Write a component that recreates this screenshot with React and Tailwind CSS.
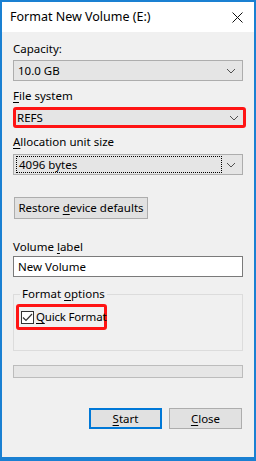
import React from 'react';

const font = { fontFamily: '"Noto Sans", "Open Sans", sans-serif' };

// access-key underline helper
function Key({ k }) {
  return <span className="underline underline-offset-2">{k}</span>;
}

function Chevron() {
  return (
    <svg width="10" height="6" viewBox="0 0 10 6" className="shrink-0">
      <path d="M1 1 L5 5 L9 1" fill="none" stroke="#505050" strokeWidth="1" />
    </svg>
  );
}

function Combo({ children, focused, className = '' }) {
  return (
    <div className={`flex items-center h-[21px] bg-[#e5e5e5] border border-[#adadad] pl-[2px] pr-[6px] ${className}`}>
      <div className={`flex-1 flex items-center h-[17px] pl-[2px] ${focused ? 'border border-dotted border-black' : ''}`}>
        {children}
      </div>
      <div className="w-[14px] flex justify-end">
        <Chevron />
      </div>
    </div>
  );
}

export default function App() {
  return (
    <div style={font} className="w-[256px] h-[461px] bg-[#1a80d2] p-[2px] pb-[4px] text-[11.5px] leading-[16px] text-black whitespace-nowrap">
      <div className="h-full flex flex-col bg-[#f0f0f0]">
        {/* title bar */}
        <div className="h-[30px] bg-white flex items-center justify-between pl-[8px] pr-[11px]">
          <span className="text-[12.5px]">Format New Volume (E:)</span>
          <svg width="11" height="11" viewBox="0 0 11 11">
            <path d="M0.5 0.5 L10.5 10.5 M10.5 0.5 L0.5 10.5" stroke="#111" strokeWidth="1" />
          </svg>
        </div>

        <div className="flex flex-col px-[11px]">
          <div className="mt-[9px]">Capacity:</div>
          <Combo className="mt-[3px]">10.0 GB</Combo>

          <div className="mt-[7px]"><Key k="F" />ile system</div>
          <div className="mt-[3px] -mr-[3px] border-[3px] border-[#ff1414] rounded-[3px]">
            <div className="flex items-center h-[15px] bg-[#e5e5e5] pl-[1px] pr-[4px]">
              <span className="flex-1">REFS</span>
              <Chevron />
            </div>
          </div>

          <div className="mt-[6px]"><Key k="A" />llocation unit size</div>
          <Combo focused className="mt-[4px]">4096 bytes</Combo>

          <div className="mt-[22px] ml-[1px] w-[134px] h-[22px] bg-[#e1e1e1] border border-[#adadad] flex items-center justify-center">
            <span>Restore <Key k="d" />evice defaults</span>
          </div>

          <div className="mt-[20px]">Volume <Key k="l" />abel</div>
          <div className="mt-[1px] h-[21px] bg-white border border-[#7a7a7a] flex items-center pl-[4px]">
            New Volume
          </div>

          {/* format options group */}
          <div className="mt-[17px] h-[57px] border border-[#dcdcdc] relative px-[2px]">
            <div className="absolute -top-[9px] left-[6px] bg-[#f0f0f0] px-[2px]">
              Format <Key k="o" />ptions
            </div>
            <div className="mt-[9px] w-[91px] h-[26px] border-[3px] border-[#ff1414] rounded-[3px] flex items-center pl-[2px] gap-[2px]">
              <div className="w-[13px] h-[13px] shrink-0 border border-[#333] bg-white flex items-center justify-center">
                <svg width="11" height="9" viewBox="0 0 11 9">
                  <path d="M1 4.5 L4 7.5 L10 1" fill="none" stroke="#333" strokeWidth="1.2" />
                </svg>
              </div>
              <span className="tracking-[-0.2px]"><Key k="Q" />uick Format</span>
            </div>
          </div>

          {/* progress */}
          <div className="mt-[14px] h-[13px] bg-[#e6e6e6] border border-[#bcbcbc]" />

          <div className="mt-[30px] flex justify-end gap-[7px] pr-[1px]">
            <div className="w-[73px] h-[21px] bg-[#e1e1e1] border-2 border-[#0078d7] flex items-center justify-center">
              <span><Key k="S" />tart</span>
            </div>
            <div className="w-[73px] h-[21px] bg-[#e1e1e1] border border-[#adadad] flex items-center justify-center">
              <span><Key k="C" />lose</span>
            </div>
          </div>
        </div>
      </div>
    </div>
  );
}
